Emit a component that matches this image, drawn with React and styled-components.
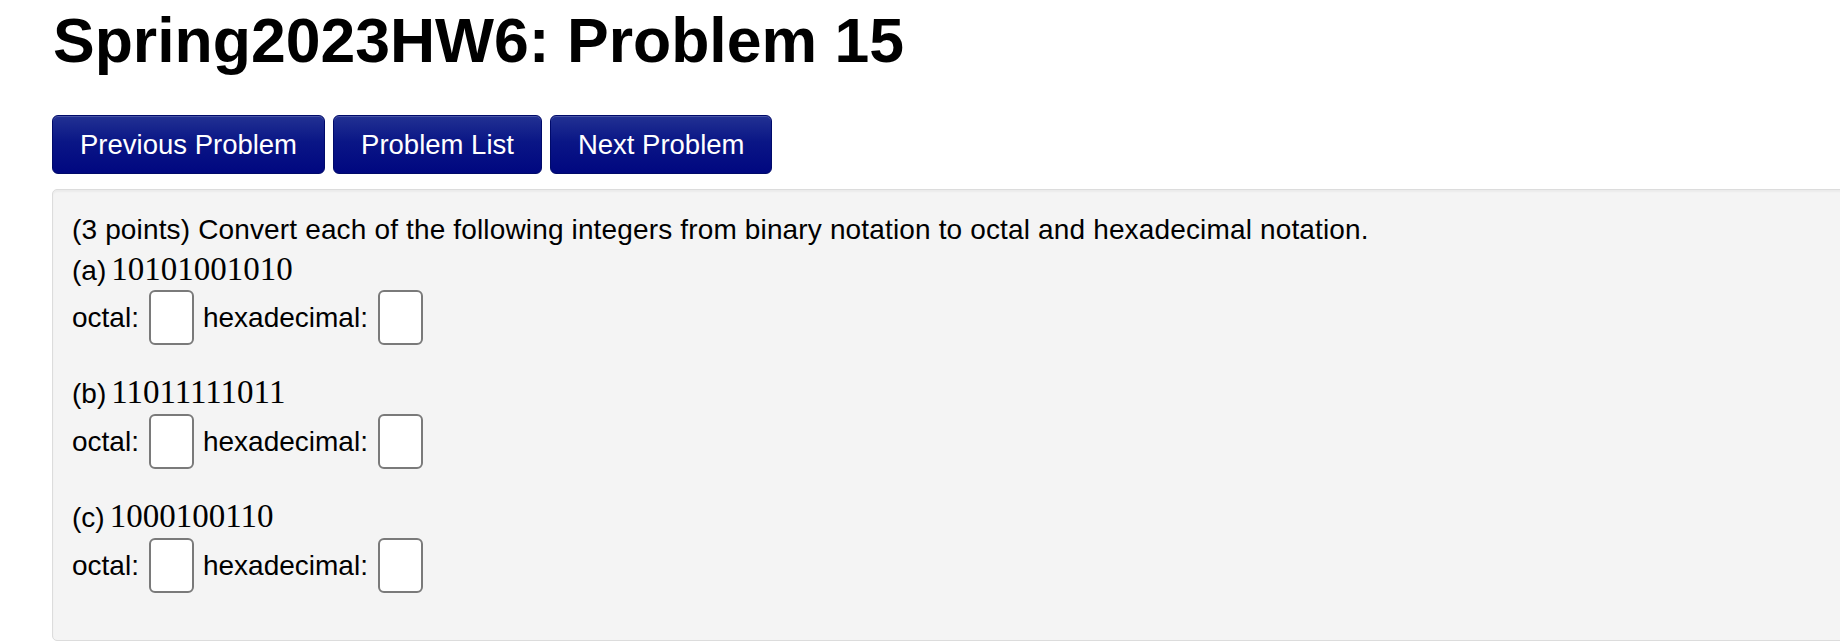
import React from "react";
import styled, { createGlobalStyle } from "styled-components";

const GlobalStyle = createGlobalStyle`
  html, body {
    margin: 0;
    padding: 0;
    background: #fff;
    overflow: hidden;
  }
  body {
    font-family: "Liberation Sans", Arial, Helvetica, sans-serif;
    color: #000;
  }
`;

const Page = styled.div`
  width: 1840px;
  height: 644px;
  padding: 6px 0 0 52px;
  box-sizing: border-box;
`;

const Title = styled.h1`
  margin: 0;
  font-size: 62.5px;
  line-height: 69px;
  font-weight: 700;
  padding-left: 1px;
`;

const NavBar = styled.div`
  display: flex;
  gap: 8px;
  margin-top: 40px;
`;

const NavButton = styled.button`
  height: 59px;
  padding: 0 27px;
  font-family: "Liberation Sans", Arial, sans-serif;
  font-size: 27.5px;
  color: #fff;
  border: 1px solid #000a6a;
  border-radius: 6px;
  background: linear-gradient(to bottom, #223193 0%, #0a1686 45%, #000780 100%);
  box-shadow: inset 0 1px 0 rgba(255, 255, 255, 0.18);
  cursor: pointer;
`;

const Panel = styled.div`
  margin-top: 15px;
  width: 1820px;
  height: 452px;
  box-sizing: border-box;
  background: #f4f4f4;
  border: 1px solid #dcdcdc;
  border-radius: 5px;
  box-shadow: inset 0 2px 2px rgba(0, 0, 0, 0.04);
  padding: 21px 0 0 19px;
  font-size: 28px;
  line-height: 38px;
`;

const Intro = styled.div`
  margin-bottom: 3px;
  letter-spacing: 0.15px;
`;

const Part = styled.div`
  margin-top: ${(p) => (p.$first ? "0" : "30px")};
`;

const Label = styled.div`
  line-height: 38px;
`;

const Binary = styled.span`
  font-family: "Liberation Serif", "Times New Roman", serif;
  font-size: 33px;
  line-height: 0;
  margin-left: 5px;
`;

const AnswerRow = styled.div`
  display: flex;
  align-items: center;
  height: 55px;
  margin-top: ${(p) => (p.$offset ? "1px" : "0")};
`;

const AnswerLabel = styled.label`
  line-height: 38px;
`;

const AnswerBox = styled.input`
  width: 45px;
  height: 55px;
  box-sizing: border-box;
  border: 2px solid #7a7a7a;
  border-radius: 6px;
  background: #fff;
  margin: 0 9px 0 10px;
  padding: 0;
  font-size: 27px;
`;

const parts = [
  { key: "a", value: "10101001010" },
  { key: "b", value: "11011111011" },
  { key: "c", value: "1000100110" },
];

const App = () => {
  return (
    <Page>
      <GlobalStyle />
      <Title>Spring2023HW6: Problem 15</Title>
      <NavBar>
        <NavButton>Previous Problem</NavButton>
        <NavButton>Problem List</NavButton>
        <NavButton>Next Problem</NavButton>
      </NavBar>
      <Panel>
        <Intro>
          (3 points) Convert each of the following integers from binary notation
          to octal and hexadecimal notation.
        </Intro>
        {parts.map((part, i) => (
          <Part key={part.key} $first={i === 0}>
            <Label>
              ({part.key})<Binary>{part.value}</Binary>
            </Label>
            <AnswerRow $offset={i > 0}>
              <AnswerLabel>octal:</AnswerLabel>
              <AnswerBox type="text" />
              <AnswerLabel>hexadecimal:</AnswerLabel>
              <AnswerBox type="text" />
            </AnswerRow>
          </Part>
        ))}
      </Panel>
    </Page>
  );
};

export default App;
